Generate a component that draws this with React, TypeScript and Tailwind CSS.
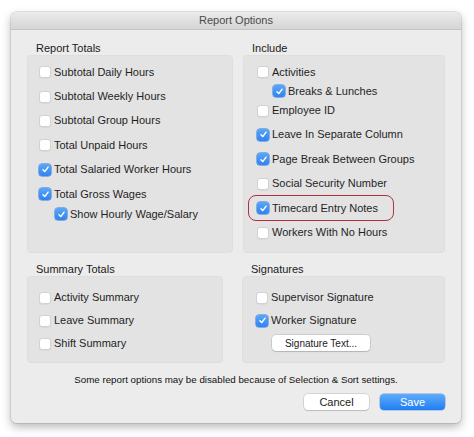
import React from "react";

const font = { fontFamily: "'Liberation Sans', Arial, sans-serif" };

function Box({ checked }: { checked?: boolean }) {
  if (checked) {
    return (
      <span className="flex h-[12px] w-[12px] shrink-0 items-center justify-center rounded-[3px] bg-gradient-to-b from-[#5aa6f8] to-[#2f83f0] shadow-[0_0_0_0.5px_#2a74d8]">
        <svg width="9" height="9" viewBox="0 0 10 10">
          <path d="M2.2 5.2 L4.2 7.3 L7.9 2.4" fill="none" stroke="#fff" strokeWidth="1.6" strokeLinecap="round" strokeLinejoin="round" />
        </svg>
      </span>
    );
  }
  return (
    <span className="h-[12px] w-[12px] shrink-0 rounded-[3px] border border-[#d2d2d2] bg-white shadow-[0_0.5px_0.5px_rgba(0,0,0,0.08)]" />
  );
}

function Row({
  label,
  checked,
  h = "h-[24.4px]",
  indent = false,
}: {
  label: string;
  checked?: boolean;
  h?: string;
  indent?: boolean;
}) {
  return (
    <div className={`flex items-center gap-[3px] ${h} ${indent ? "pl-[16px]" : ""}`}>
      <Box checked={checked} />
      <span className="text-[11px] leading-none text-[#1f1f1f]">{label}</span>
    </div>
  );
}

function Heading({ children }: { children: React.ReactNode }) {
  return <div className="h-[14px] pl-[9px] text-[11px] leading-[14px] text-[#1a1a1a]">{children}</div>;
}

export default function App() {
  return (
    <div className="h-[437px] w-[474px] bg-white pl-[11px] pt-[12px]" style={font}>
      <div className="flex h-[411px] w-[450px] flex-col overflow-hidden rounded-[5px] bg-[#ececec] shadow-[0_4px_10px_rgba(0,0,0,0.28),0_0_0_0.5px_rgba(0,0,0,0.18)]">
        <div className="flex h-[18px] shrink-0 items-center justify-center border-b border-[#c4c4c4] bg-gradient-to-b from-[#ebebeb] to-[#d5d5d5] text-[11px] text-[#4a4a4a]">
          Report Options
        </div>
        <div className="flex flex-col px-[16px] pt-[11px]">
          <div className="flex gap-[10px]">
            <div className="flex w-[206px] flex-col">
              <Heading>Report Totals</Heading>
              <div className="h-[198px] rounded-[4px] border border-[#dedede] bg-[#e3e3e3] pl-[11px] pt-[4px]">
                <Row label="Subtotal Daily Hours" />
                <Row label="Subtotal Weekly Hours" />
                <Row label="Subtotal Group Hours" />
                <Row label="Total Unpaid Hours" />
                <Row label="Total Salaried Worker Hours" checked />
                <Row label="Total Gross Wages" checked />
                <Row label="Show Hourly Wage/Salary" checked indent h="h-[16px]" />
              </div>
            </div>
            <div className="flex w-[202px] flex-col">
              <Heading>Include</Heading>
              <div className="h-[198px] rounded-[4px] border border-[#dedede] bg-[#e3e3e3] pl-[13px] pt-[4px]">
                <Row label="Activities" />
                <Row label="Breaks & Lunches" checked indent h="h-[14px]" />
                <Row label="Employee ID" />
                <Row label="Leave In Separate Column" checked />
                <Row label="Page Break Between Groups" checked />
                <Row label="Social Security Number" />
                <div className="relative">
                  <Row label="Timecard Entry Notes" checked />
                  <div className="absolute left-[-9px] top-[-1px] h-[26px] w-[146px] rounded-[8px] border-[1.5px] border-[#b0303e]" />
                </div>
                <Row label="Workers With No Hours" />
              </div>
            </div>
          </div>
          <div className="mt-[9px] flex gap-[19px]">
            <div className="flex w-[196px] flex-col">
              <Heading>Summary Totals</Heading>
              <div className="h-[87px] rounded-[4px] border border-[#dedede] bg-[#e3e3e3] pl-[11px] pt-[9px]">
                <Row label="Activity Summary" h="h-[23px]" />
                <Row label="Leave Summary" h="h-[23px]" />
                <Row label="Shift Summary" h="h-[23px]" />
              </div>
            </div>
            <div className="flex w-[203px] flex-col">
              <Heading>Signatures</Heading>
              <div className="h-[87px] rounded-[4px] border border-[#dedede] bg-[#e3e3e3] pl-[13px] pt-[9px]">
                <Row label="Supervisor Signature" h="h-[23px]" />
                <Row label="Worker Signature" checked h="h-[23px]" />
                <div className="mt-[3px] pl-[16px]">
                  <div className="flex h-[16px] w-[98px] items-center justify-center rounded-[4px] bg-white text-[10px] text-[#222] shadow-[0_0_0_0.5px_rgba(0,0,0,0.2),0_1px_1px_rgba(0,0,0,0.12)]">
                    Signature Text...
                  </div>
                </div>
              </div>
            </div>
          </div>
          <div className="mt-[11px] text-center text-[9.75px] leading-[12px] text-[#111]">
            Some report options may be disabled because of Selection &amp; Sort settings.
          </div>
          <div className="mt-[8px] flex justify-end gap-[11px]">
            <div className="flex h-[16px] w-[65px] items-center justify-center rounded-[4px] bg-white text-[11px] text-[#222] shadow-[0_0_0_0.5px_rgba(0,0,0,0.2),0_1px_1px_rgba(0,0,0,0.12)]">
              Cancel
            </div>
            <div className="flex h-[16px] w-[65px] items-center justify-center rounded-[4px] bg-gradient-to-b from-[#5eabf9] to-[#1d7ef2] text-[11px] text-white shadow-[0_0_0_0.5px_rgba(20,90,200,0.5)]">
              Save
            </div>
          </div>
        </div>
      </div>
    </div>
  );
}
